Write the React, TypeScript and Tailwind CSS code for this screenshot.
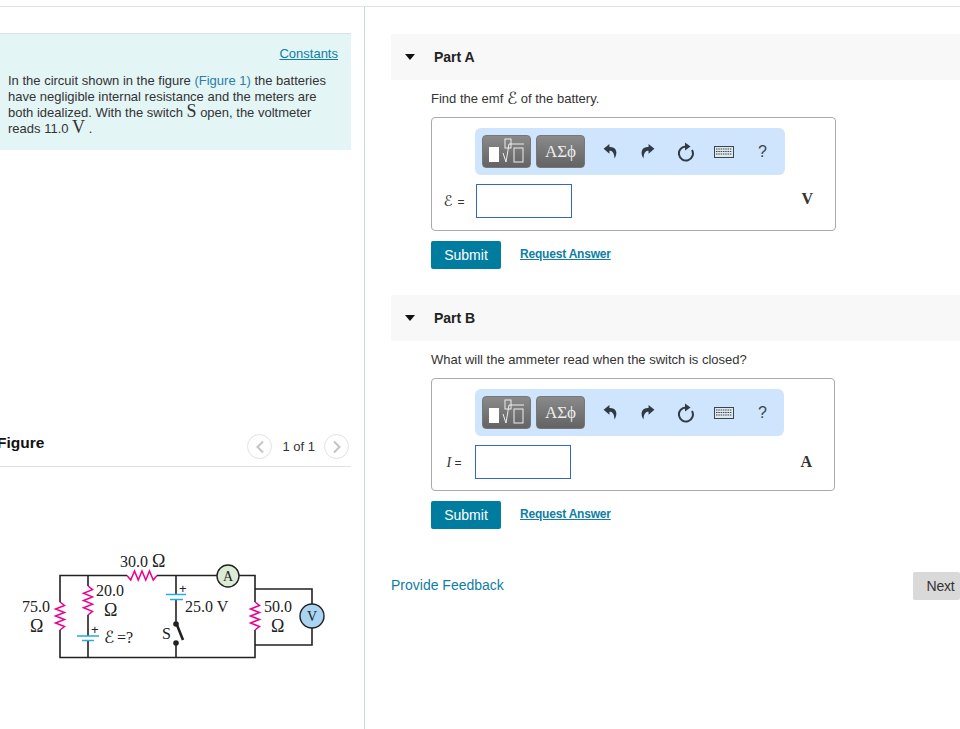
import { ReactNode } from "react";

const serif = "font-['Liberation_Serif',serif]";
const script = "font-['DejaVu_Sans',serif]";

// zigzag points for the resistors in the circuit
function zig(x: number, y: number, len: number, n: number, vertical: boolean) {
  const step = len / (n * 2);
  const pts: string[] = [];
  for (let i = 0; i <= n * 2; i++) {
    const off = i === 0 || i === n * 2 ? 0 : i % 2 ? 4.5 : -4.5;
    const along = i * step;
    pts.push(vertical ? `${x + off},${y + along}` : `${x + along},${y + off}`);
  }
  return pts.join(" ");
}

function Circuit() {
  return (
    <svg width="330" height="130" viewBox="0 0 330 130" className={`block ${serif}`}>
      <g fill="none" stroke="#222" strokeWidth="1.6">
        <path d="M127 35.5H60V62M60 90V117.5H255V90M255 62V35.5H239M217 35.5H157" />
        <path d="M88 35.5V46M88 75V96M88 100V117.5" />
        <path d="M176 35.5V54M176 60V84M176 103V117.5" />
        <path d="M255 49H312V64M312 88V105H255" />
        <path d="M177 85L183 100" strokeWidth="2.6" />
      </g>
      <g fill="none" stroke="#ec008c" strokeWidth="1.5">
        <polyline points={zig(60, 62, 28, 4, true)} />
        <polyline points={zig(88, 46, 29, 4, true)} />
        <polyline points={zig(127, 35.5, 30, 4, false)} />
        <polyline points={zig(255, 62, 28, 4, true)} />
      </g>
      <g fill="none" stroke="#29abe2" strokeWidth="1.6">
        <path d="M77 96H99M82 100.5H94" />
        <path d="M166 54.5H186M170 59.5H183" />
      </g>
      <circle cx="176" cy="84" r="2.8" fill="#222" />
      <circle cx="176" cy="103" r="2.8" fill="#222" />
      <circle cx="228" cy="36" r="11" fill="#dcebd5" stroke="#222" strokeWidth="1.4" />
      <circle cx="312" cy="76" r="12" fill="#a9d4f2" stroke="#222" strokeWidth="1.4" />
      <g fontSize="16" fill="#222">
        <text x="120" y="27">30.0</text>
        <text x="152" y="27" fontSize="18">Ω</text>
        <text x="96" y="56">20.0</text>
        <text x="104" y="76" fontSize="18">Ω</text>
        <text x="22" y="72">75.0</text>
        <text x="30" y="92" fontSize="18">Ω</text>
        <text x="91" y="94" fontFamily="Liberation Sans" fontSize="13">+</text>
        <text x="179" y="53" fontFamily="Liberation Sans" fontSize="13">+</text>
        <text x="104" y="103" fontFamily="DejaVu Sans" fontSize="17">ℰ</text>
        <text x="117" y="103">=?</text>
        <text x="185" y="72">25.0 V</text>
        <text x="162" y="99">S</text>
        <text x="264" y="72">50.0</text>
        <text x="271" y="92" fontSize="18">Ω</text>
        <text x="228" y="41" textAnchor="middle" fontSize="14">A</text>
        <text x="312" y="81" textAnchor="middle" fontSize="14">V</text>
      </g>
    </svg>
  );
}

function Chevron({ left }: { left?: boolean }) {
  return (
    <span className="flex h-[25px] w-[25px] items-center justify-center rounded-full border border-[#e2e2e2] bg-white">
      <svg width="10" height="14" viewBox="0 0 10 14" fill="none" stroke="#c4c4c4" strokeWidth="2">
        <path d={left ? "M8 1.5L2.5 7L8 12.5" : "M2 1.5L7.5 7L2 12.5"} />
      </svg>
    </span>
  );
}

function Toolbar({ width }: { width: string }) {
  const btn =
    "flex h-[33px] w-[49px] items-center justify-center rounded-[4px] bg-gradient-to-b from-[#8a8a8a] to-[#636363] border border-[#777]";
  return (
    <div className={`flex h-[47px] items-center rounded-[6px] bg-[#cfe4fd] pl-[7px] ${width}`}>
      <span className={btn}>
        <svg width="42" height="28" viewBox="0 0 42 28" fill="none">
          <rect x="3" y="9" width="10" height="15" fill="#fff" />
          <rect x="19" y="1" width="6" height="9" stroke="#eee" strokeWidth="1" />
          <path d="M17 15L20 24L23 6H38" stroke="#eee" strokeWidth="1" />
          <rect x="28" y="10" width="9" height="14" stroke="#eee" strokeWidth="1" />
        </svg>
      </span>
      <span className={`${btn} ml-[5px] ${serif} text-[17px] leading-none text-[#eee]`}>ΑΣϕ</span>
      <svg width="15" height="17" viewBox="0 0 14 16" className="ml-[18px]" fill="#2f3a42">
        <path d="M6 1L0.5 5.5L6 10V7.3C9 7.3 10.4 9 10.8 14.5C13.8 9.8 13.4 3.6 6 3.7Z" />
      </svg>
      <svg width="15" height="17" viewBox="0 0 14 16" className="ml-[22px]" fill="#2f3a42">
        <path d="M8 1L13.5 5.5L8 10V7.3C5 7.3 3.6 9 3.2 14.5C0.2 9.8 0.6 3.6 8 3.7Z" />
      </svg>
      <svg width="18" height="20" viewBox="0 0 18 20" className="ml-[22px]" fill="none" stroke="#2f3a42" strokeWidth="2">
        <path d="M9 4.5A7 7 0 1 0 15 8" />
        <path d="M8 0.5L13.5 4.5L8 8.5Z" fill="#2f3a42" stroke="none" />
      </svg>
      <svg width="20" height="12" viewBox="0 0 20 12" className="ml-[19px]" fill="none">
        <rect x="0.5" y="0.5" width="19" height="11" fill="#dfe7ef" stroke="#3a444c" />
        <path d="M2 3H18M2 5.5H18" stroke="#3a444c" strokeDasharray="1.5 0.8" />
        <path d="M2 8H18" stroke="#3a444c" strokeDasharray="1.5 0.8" />
      </svg>
      <span className="ml-[24px] text-[16px] text-[#3a444c]">?</span>
    </div>
  );
}

function AnswerBox({
  label,
  unit,
  boxWidth,
  toolbarWidth,
  inputMargin,
  unitMargin,
  height,
}: {
  label: ReactNode;
  unit: string;
  boxWidth: string;
  toolbarWidth: string;
  inputMargin: string;
  unitMargin: string;
  height: string;
}) {
  return (
    <div className={`rounded-[4px] border border-[#aaa] pt-[10px] ${boxWidth} ${height}`}>
      <div className="ml-[43px]">
        <Toolbar width={toolbarWidth} />
      </div>
      <div className="mt-[9px] flex items-center">
        <span className="flex w-[43px] justify-center pl-[1px] text-[12px] text-[#333]">{label}</span>
        <span className={`h-[34px] w-[96px] border border-[#3366cc] bg-white ${inputMargin}`} />
        <span className={`ml-auto mr-[22px] text-[16px] font-bold text-[#333] ${serif} ${unitMargin}`}>{unit}</span>
      </div>
    </div>
  );
}

function Part({ title, children }: { title: string; children: ReactNode }) {
  return (
    <>
      <div className="flex h-[46px] items-center bg-[#f8f8f8] pl-[14px]">
        <span className="h-0 w-0 border-x-[5px] border-t-[6px] border-x-transparent border-t-[#111]" />
        <span className="ml-[19px] text-[14px] font-bold text-[#222]">{title}</span>
      </div>
      <div className="pl-[40px]">{children}</div>
    </>
  );
}

function Actions() {
  return (
    <div className="mt-[10px] flex items-center">
      <button className="h-[28px] w-[70px] rounded-[2px] bg-[#007c9f] text-[14px] text-white">Submit</button>
      <a className="mb-[2px] ml-[19px] text-[12px] font-bold tracking-[-0.2px] text-[#0e7ea4] underline">
        Request Answer
      </a>
    </div>
  );
}

export default function App() {
  return (
    <div className="h-[729px] w-[960px] overflow-hidden bg-white pt-[6px] font-['Liberation_Sans',Arial,sans-serif] text-[13px] text-[#333]">
      <div className="flex h-full border-t border-[#dde3e8]">
        <div className="w-[365px] shrink-0 border-r border-[#c9d8e6] pt-[26px]">
          <div className="h-[117px] w-[351px] border-t border-[#d8e2e6] bg-[#e4f5f6] pl-[8px] pr-[13px] pt-[12px]">
            <div className="text-right leading-[16px]">
              <a className="text-[#0e7ea4] underline">Constants</a>
            </div>
            <p className="mt-[11px] leading-[16px]">
              In the circuit shown in the figure <span className="text-[#2a7ea8]">(Figure 1)</span> the batteries
              have negligible internal resistance and the meters are both idealized. With the switch{" "}
              <span className={`${serif} text-[18px] leading-[0]`}>S</span> open, the voltmeter reads 11.0{" "}
              <span className={`${serif} text-[18px] leading-[0]`}>V</span> .
            </p>
          </div>
          <div className="mt-[284px] flex h-[33px] w-[351px] items-start border-b border-[#dde3e8] pr-[2px]">
            <span className="-ml-[3px] text-[15.5px] font-bold leading-[18px] text-[#111]">Figure</span>
            <div className="ml-auto flex items-center">
              <Chevron left />
              <span className="ml-[10px] mr-[9px] text-[#333]">1 of 1</span>
              <Chevron />
            </div>
          </div>
          <div className="mt-[73px]">
            <Circuit />
          </div>
        </div>

        <div className="min-w-0 flex-1 pl-[26px] pt-[27px]">
          <Part title="Part A">
            <p className="flex h-[37px] items-center">
              Find the emf&nbsp;<span className={`${script} text-[17px]`}>ℰ</span>&nbsp;of the battery.
            </p>
            <AnswerBox
              label={
                <span className={`${script} text-[15px]`}>
                  ℰ&nbsp;<span className="font-['Liberation_Sans'] text-[12px]">=</span>
                </span>
              }
              unit="V"
              boxWidth="w-[405px]"
              toolbarWidth="w-[310px]"
              inputMargin="ml-[1px]"
              unitMargin="mb-[4px]"
              height="h-[114px]"
            />
            <Actions />
          </Part>
          <div className="h-[26px]" />
          <Part title="Part B">
            <p className="flex h-[37px] items-center">What will the ammeter read when the switch is closed?</p>
            <AnswerBox
              label={
                <span className={`${serif} text-[14px] italic`}>
                  I&nbsp;<span className="font-['Liberation_Sans'] not-italic text-[12px]">=</span>
                </span>
              }
              unit="A"
              boxWidth="w-[404px]"
              toolbarWidth="w-[309px]"
              inputMargin=""
              unitMargin=""
              height="h-[113px]"
            />
            <Actions />
          </Part>
          <div className="mt-[43px] flex items-center justify-between">
            <a className="mb-[2px] text-[14px] text-[#0e7ea4]">Provide Feedback</a>
            <button className="h-[28px] w-[47px] rounded-[2px] bg-[#d9d9d9] pl-[8px] text-[14px] tracking-[-0.2px] text-[#333]">
              Next
            </button>
          </div>
        </div>
      </div>
    </div>
  );
}
